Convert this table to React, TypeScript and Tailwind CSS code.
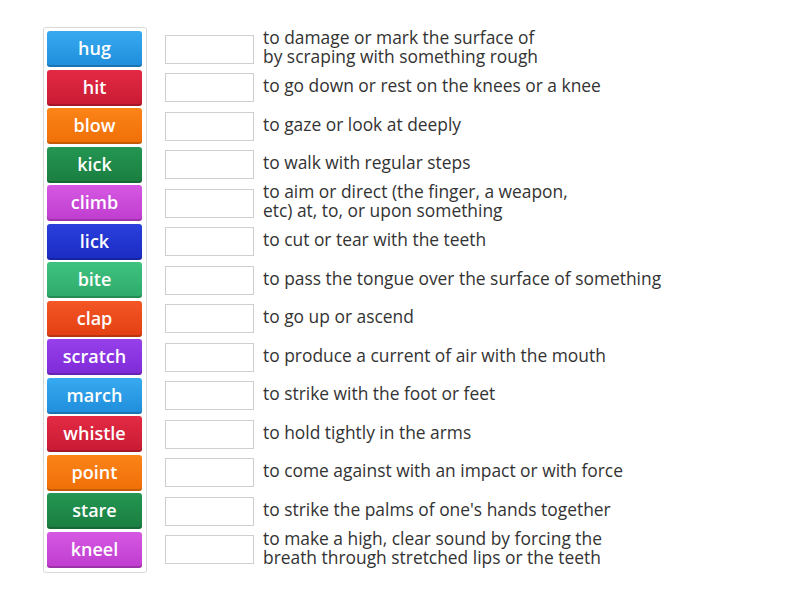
const WORDS: { label: string; cls: string }[] = [
  { label: 'hug', cls: 'bg-gradient-to-b from-[#37aaf0] to-[#1f8ddb]' },
  { label: 'hit', cls: 'bg-gradient-to-b from-[#e42a45] to-[#c81a33]' },
  { label: 'blow', cls: 'bg-gradient-to-b from-[#fb8418] to-[#ef6f06]' },
  { label: 'kick', cls: 'bg-gradient-to-b from-[#249652] to-[#1a7e40]' },
  { label: 'climb', cls: 'bg-gradient-to-b from-[#d558e2] to-[#bf3ccf]' },
  { label: 'lick', cls: 'bg-gradient-to-b from-[#2a3fdc] to-[#1a2bc2]' },
  { label: 'bite', cls: 'bg-gradient-to-b from-[#3fc27f] to-[#2eaa6a]' },
  { label: 'clap', cls: 'bg-gradient-to-b from-[#f45624] to-[#e23f12]' },
  { label: 'scratch', cls: 'bg-gradient-to-b from-[#9740ec] to-[#7e2ad6]' },
  { label: 'march', cls: 'bg-gradient-to-b from-[#37aaf0] to-[#1f8ddb]' },
  { label: 'whistle', cls: 'bg-gradient-to-b from-[#e42a45] to-[#c81a33]' },
  { label: 'point', cls: 'bg-gradient-to-b from-[#fb8418] to-[#ef6f06]' },
  { label: 'stare', cls: 'bg-gradient-to-b from-[#249652] to-[#1a7e40]' },
  { label: 'kneel', cls: 'bg-gradient-to-b from-[#d558e2] to-[#bf3ccf]' },
]

// each definition is a list of lines, wrapped as in the exercise
const DEFINITIONS: string[][] = [
  ['to damage or mark the surface of', 'by scraping with something rough'],
  ['to go down or rest on the knees or a knee'],
  ['to gaze or look at deeply'],
  ['to walk with regular steps'],
  ['to aim or direct (the finger, a weapon,', 'etc) at, to, or upon something'],
  ['to cut or tear with the teeth'],
  ['to pass the tongue over the surface of something'],
  ['to go up or ascend'],
  ['to produce a current of air with the mouth'],
  ['to strike with the foot or feet'],
  ['to hold tightly in the arms'],
  ['to come against with an impact or with force'],
  ["to strike the palms of one's hands together"],
  ['to make a high, clear sound by forcing the', 'breath through stretched lips or the teeth'],
]

export default function App() {
  return (
    <div className="flex h-[600px] w-[800px] bg-white pl-[43px] pt-[27px] font-['Open_Sans',sans-serif]">
      {/* word tiles */}
      <div className="flex h-fit w-[104px] flex-col gap-[2.5px] rounded-[3px] border border-[#d9d9d9] pb-[4px] pl-[3px] pr-[4px] pt-[3px]">
        {WORDS.map((w) => (
          <div
            key={w.label}
            className={`flex h-[36px] w-[95px] items-center justify-center rounded-[3px] pb-[1px] text-[18px] font-semibold text-white shadow-[inset_0_-2px_0_rgba(0,0,0,0.18)] ${w.cls}`}
          >
            {w.label}
          </div>
        ))}
      </div>

      {/* drop boxes with definitions */}
      <div className="ml-[18px] flex flex-col gap-[2.5px] pt-[4px]">
        {DEFINITIONS.map((lines) => (
          <div key={lines[0]} className="flex h-[36px] items-center">
            <div className="h-[29px] w-[89px] shrink-0 border border-[#cfcfcf] bg-white" />
            <div className="mb-[4px] ml-[9px] whitespace-nowrap text-[17.4px] leading-[19px] text-[#333]">
              {lines.map((l) => (
                <div key={l}>{l}</div>
              ))}
            </div>
          </div>
        ))}
      </div>
    </div>
  )
}
